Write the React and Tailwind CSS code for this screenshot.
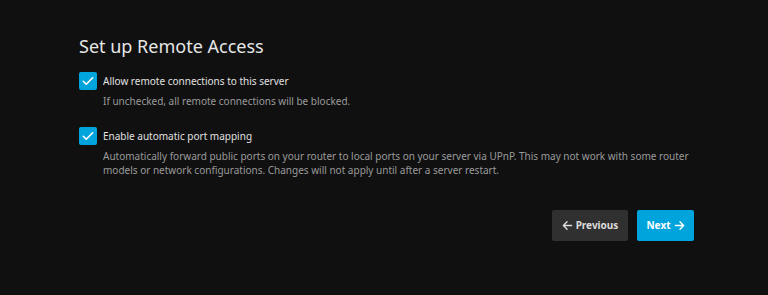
import React, { useState } from "react";

function Check({ checked, onChange }) {
  return (
    <button
      type="button"
      onClick={onChange}
      className={`w-[18px] h-[18px] rounded-[2px] flex items-center justify-center shrink-0 ${
        checked ? "bg-[#00a4dc]" : "border-2 border-[#aaa]"
      }`}
    >
      {checked && (
        <svg width="14" height="14" viewBox="0 0 24 24" fill="none" stroke="white" strokeWidth="2.8" strokeLinecap="round" strokeLinejoin="round">
          <path d="M4 12.5l5 5L20 6.5" />
        </svg>
      )}
    </button>
  );
}

function Option({ label, desc, checked, onChange }) {
  return (
    <div>
      <label className="flex items-center gap-[6px] cursor-pointer">
        <Check checked={checked} onChange={onChange} />
        <span className="text-[10px] text-[#e0e0e0]">{label}</span>
      </label>
      <p className="pl-[24px] mt-[4px] text-[10px] leading-[14px] text-[#9a9a9a]">{desc}</p>
    </div>
  );
}

function App() {
  const [remote, setRemote] = useState(true);
  const [upnp, setUpnp] = useState(true);

  return (
    <div
      className="w-full h-[295px] bg-[#101010] pl-[79px] pr-[74px] pt-[34px]"
      style={{ fontFamily: '"Noto Sans", sans-serif' }}
    >
      <h1 className="text-[18px] text-[#e6e6e6] leading-[24px]">Set up Remote Access</h1>
      <div className="mt-[14px] flex flex-col gap-[19px]">
        <Option
          label="Allow remote connections to this server"
          desc="If unchecked, all remote connections will be blocked."
          checked={remote}
          onChange={() => setRemote(!remote)}
        />
        <Option
          label="Enable automatic port mapping"
          desc="Automatically forward public ports on your router to local ports on your server via UPnP. This may not work with some router models or network configurations. Changes will not apply until after a server restart."
          checked={upnp}
          onChange={() => setUpnp(!upnp)}
        />
      </div>
      <div className="mt-[33px] flex justify-end gap-[9px]">
        <button className="h-[31px] w-[76px] rounded-[2px] bg-[#303030] text-[#dcdcdc] text-[10px] font-bold flex items-center justify-center gap-[3px]">
          <svg width="11" height="11" viewBox="0 0 24 24" fill="none" stroke="currentColor" strokeWidth="3" strokeLinecap="round" strokeLinejoin="round">
            <path d="M21 12H4M11 4l-8 8 8 8" />
          </svg>
          Previous
        </button>
        <button className="h-[31px] w-[57px] rounded-[2px] bg-[#00a4dc] text-white text-[10px] font-bold flex items-center justify-center gap-[3px]">
          Next
          <svg width="11" height="11" viewBox="0 0 24 24" fill="none" stroke="currentColor" strokeWidth="3" strokeLinecap="round" strokeLinejoin="round">
            <path d="M3 12h17M13 4l8 8-8 8" />
          </svg>
        </button>
      </div>
    </div>
  );
}

export default App;
